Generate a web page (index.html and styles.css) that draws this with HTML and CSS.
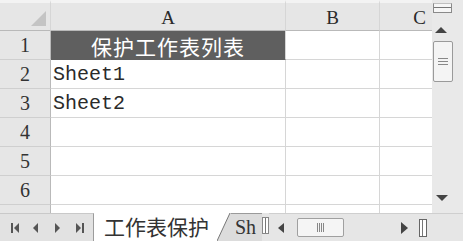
FILE: index.html
```html
<!DOCTYPE html>
<html lang="zh-CN">
<head>
    <meta charset="UTF-8">
    <title>工作表保护</title>
    <link rel="stylesheet" href="styles.css">
</head>
<body>
<div class="excel">
    <div class="main">
        <div class="grid">
            <div class="corner"><span class="corner-tri"></span></div>
            <div class="colhead">A</div>
            <div class="colhead">B</div>
            <div class="colhead">C</div>

            <div class="rowhead">1</div>
            <div class="cell title">保护工作表列表</div>
            <div class="cell"></div>
            <div class="cell"></div>

            <div class="rowhead">2</div>
            <div class="cell">Sheet1</div>
            <div class="cell"></div>
            <div class="cell"></div>

            <div class="rowhead">3</div>
            <div class="cell">Sheet2</div>
            <div class="cell"></div>
            <div class="cell"></div>

            <div class="rowhead">4</div>
            <div class="cell"></div>
            <div class="cell"></div>
            <div class="cell"></div>

            <div class="rowhead">5</div>
            <div class="cell"></div>
            <div class="cell"></div>
            <div class="cell"></div>

            <div class="rowhead">6</div>
            <div class="cell"></div>
            <div class="cell"></div>
            <div class="cell"></div>

            <div class="rowhead"><span class="peek"></span></div>
            <div class="cell"></div>
            <div class="cell"></div>
            <div class="cell"></div>
        </div>
        <div class="vscroll">
            <div class="split-box"></div>
            <svg class="arrow-up" width="12" height="6" viewBox="0 0 12 6"><polygon points="0,6 6,0 12,6" fill="#444"/></svg>
            <div class="vthumb">
                <span></span><span></span><span></span>
            </div>
            <div class="vtrack"></div>
            <svg class="arrow-down" width="12" height="6" viewBox="0 0 12 6"><polygon points="0,0 12,0 6,6" fill="#444"/></svg>
        </div>
    </div>

    <div class="tabbar">
        <div class="nav">
            <svg width="93" height="28" viewBox="0 0 93 28">
                <rect x="11" y="9" width="2" height="10" fill="#555"/>
                <polygon points="19,9 14,14 19,19" fill="#555"/>
                <polygon points="38,9 33,14 38,19" fill="#555"/>
                <polygon points="55,9 60,14 55,19" fill="#555"/>
                <polygon points="76,9 81,14 76,19" fill="#555"/>
                <rect x="82" y="9" width="2" height="10" fill="#555"/>
            </svg>
        </div>
        <div class="tab-active">工作表保护</div>
        <svg class="tab-slant" width="14" height="28" viewBox="0 0 14 28">
            <polygon points="0,28 13,0 14,0 14,28" fill="#dcdcdc"/>
            <line x1="0" y1="28" x2="13" y2="0" stroke="#777" stroke-width="1"/>
        </svg>
        <div class="tab-sh">Sh</div>
        <div class="split-handle"></div>
        <div class="hscroll">
            <svg class="h-left" width="6" height="10" viewBox="0 0 6 10"><polygon points="6,0 0,5 6,10" fill="#444"/></svg>
            <div class="hthumb"><span></span><span></span><span></span><span></span></div>
            <div class="htrack"></div>
            <svg class="h-right" width="7" height="12" viewBox="0 0 7 12"><polygon points="0,0 7,6 0,12" fill="#444"/></svg>
            <div class="hsplit"></div>
        </div>
    </div>
</div>
</body>
</html>
```

FILE: styles.css
```css
html, body {
    margin: 0;
    padding: 0;
    background: #fff;
}

.excel {
    width: 463px;
    height: 241px;
    display: flex;
    flex-direction: column;
    overflow: hidden;
    font-family: "Liberation Serif", serif;
    color: #2a2a2a;
}

.main {
    display: flex;
    height: 213px;
}

.grid {
    flex: 1;
    display: grid;
    grid-template-columns: 51px 235px 94px 80px;
    grid-template-rows: 31px repeat(7, 29px);
    overflow: hidden;
}

.grid > div {
    box-sizing: border-box;
    border-right: 1px solid #d6d6d6;
    border-bottom: 1px solid #d6d6d6;
    display: flex;
    align-items: center;
}

.corner {
    background: #e6e6e6;
    border-top: 3px solid #f3f3f3;
    position: relative;
}

.corner-tri {
    position: absolute;
    right: 4px;
    bottom: 4px;
    width: 0;
    height: 0;
    border-left: 15px solid transparent;
    border-bottom: 15px solid #c4c4c4;
}

.colhead {
    background: #e6e6e6;
    border-top: 3px solid #f3f3f3;
    justify-content: center;
    font-size: 19px;
    padding-top: 2px;
}

.grid > .colhead,
.grid > .corner {
    border-bottom-color: #b9b9b9;
}

.grid > .rowhead {
    background: #e6e6e6;
    justify-content: center;
    font-size: 20px;
    border-right-color: #b9b9b9;
    border-bottom-color: #cfcfcf;
    color: #333;
}

.grid > .rowhead:last-of-type {
    align-items: flex-start;
}

.peek {
    width: 9px;
    height: 2px;
    margin-top: 4px;
    background: #555;
}

.cell {
    font-family: "Liberation Mono", monospace;
    font-size: 20px;
    padding-left: 2px;
    padding-top: 1px;
}

.grid > .title {
    background: #5f5f5f;
    color: #fff;
    justify-content: center;
    font-family: "Noto Sans CJK SC", sans-serif;
    font-size: 21px;
    letter-spacing: 1px;
    padding-left: 0;
    border-bottom-color: #5f5f5f;
}

.vscroll {
    width: 31px;
    background: #e9e9e9;
    display: flex;
    flex-direction: column;
    align-items: flex-start;
}

.split-box {
    width: 19px;
    height: 10px;
    margin: 3px 0 0 1px;
    box-sizing: border-box;
    border: 1px solid #8a8a8a;
    border-top-color: #c0c0c0;
    background: linear-gradient(#f6f6f6 0 3px, #777 3px 4px, #f6f6f6 4px);
}

.arrow-up {
    margin: 14px 0 0 3px;
}

.vthumb {
    width: 20px;
    height: 41px;
    margin: 8px 0 0 1px;
    box-sizing: border-box;
    border: 1px solid #9a9a9a;
    border-radius: 2px;
    background: #f4f4f4;
    display: flex;
    flex-direction: column;
    align-items: center;
    justify-content: center;
    gap: 2px;
}

.vthumb span {
    width: 10px;
    height: 1px;
    background: #888;
}

.vtrack {
    flex: 1;
}

.arrow-down {
    margin: 0 0 12px 4px;
}

.tabbar {
    height: 28px;
    display: flex;
    background: #e6e6e6;
}

.nav {
    width: 94px;
    box-sizing: border-box;
    border-right: 1px solid #9c9c9c;
    border-top: 1px solid #c9c9c9;
    background: #e2e2e2;
}

.nav svg {
    display: block;
}

.tab-active {
    width: 123px;
    background: #fff;
    font-family: "Noto Sans CJK SC", sans-serif;
    font-size: 21px;
    color: #333;
    padding-left: 10px;
    box-sizing: border-box;
    line-height: 26px;
}

.tab-slant {
    display: block;
    background: #fff;
}

.tab-sh {
    width: 31px;
    background: #dcdcdc;
    border-top: 1px solid #9a9a9a;
    box-sizing: border-box;
    font-size: 20px;
    line-height: 26px;
    padding-left: 4px;
    color: #333;
}

.split-handle {
    width: 7px;
    height: 17px;
    margin-top: 4px;
    box-sizing: border-box;
    border: 1px solid #888;
    background: linear-gradient(90deg, #fff 0 2px, #777 2px 3px, #fff 3px);
}

.hscroll {
    flex: 1;
    display: flex;
    align-items: center;
    border-top: 1px solid #cfcfcf;
}

.h-left {
    margin-left: 9px;
}

.hthumb {
    width: 47px;
    height: 19px;
    margin-left: 13px;
    box-sizing: border-box;
    border: 1px solid #a0a0a0;
    border-radius: 2px;
    background: #f5f5f5;
    display: flex;
    justify-content: center;
    align-items: center;
    gap: 1px;
}

.hthumb span {
    width: 1px;
    height: 9px;
    background: #888;
}

.htrack {
    width: 57px;
}

.hsplit {
    width: 8px;
    height: 18px;
    margin-left: 11px;
    box-sizing: border-box;
    border: 1px solid #666;
    background: linear-gradient(90deg, #fff 0 2px, #777 2px 3px, #fff 3px);
}
```
